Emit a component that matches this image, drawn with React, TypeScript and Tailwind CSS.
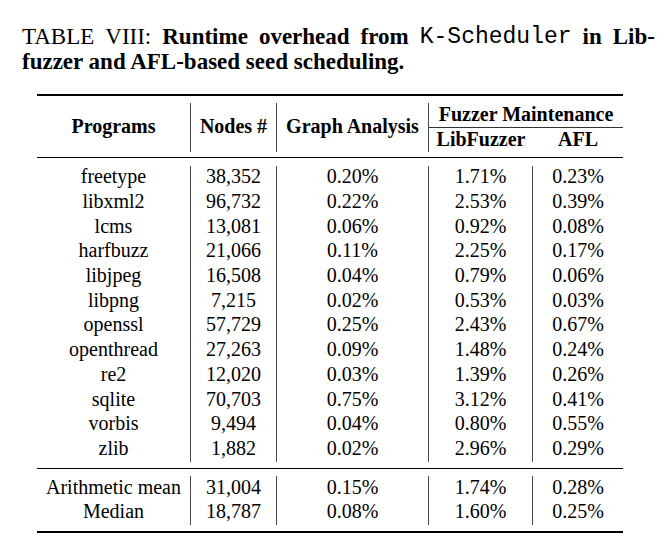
const rows = [
  ["freetype", "38,352", "0.20%", "1.71%", "0.23%"],
  ["libxml2", "96,732", "0.22%", "2.53%", "0.39%"],
  ["lcms", "13,081", "0.06%", "0.92%", "0.08%"],
  ["harfbuzz", "21,066", "0.11%", "2.25%", "0.17%"],
  ["libjpeg", "16,508", "0.04%", "0.79%", "0.06%"],
  ["libpng", "7,215", "0.02%", "0.53%", "0.03%"],
  ["openssl", "57,729", "0.25%", "2.43%", "0.67%"],
  ["openthread", "27,263", "0.09%", "1.48%", "0.24%"],
  ["re2", "12,020", "0.03%", "1.39%", "0.26%"],
  ["sqlite", "70,703", "0.75%", "3.12%", "0.41%"],
  ["vorbis", "9,494", "0.04%", "0.80%", "0.55%"],
  ["zlib", "1,882", "0.02%", "2.96%", "0.29%"],
];

const summary = [
  ["Arithmetic mean", "31,004", "0.15%", "1.74%", "0.28%"],
  ["Median", "18,787", "0.08%", "1.60%", "0.25%"],
];

const cols = "grid grid-cols-[154px_86px_152px_104px_90px]";

const Row = ({ cells }: { cells: string[] }) => (
  <div className={`${cols} h-[24.7px] grid-rows-[24.7px]`}>
    {cells.map((c, i) => (
      <div
        key={i}
        className={`flex items-center justify-center whitespace-nowrap leading-[18px] pb-[3px] ${
          i < 4 ? "border-r border-[#4a4a4a]" : ""
        }`}
      >
        {c}
      </div>
    ))}
  </div>
);

const App = () => {
  return (
    <div className="w-[669px] h-[548px] bg-white text-black [font-family:Liberation_Serif,serif] overflow-hidden">
      {/* caption */}
      <div className="pt-[25px] pl-[22px] w-[655px] text-[23px] leading-[24.5px]">
        <div className="whitespace-nowrap flex justify-between">
          <span>TABLE</span>
          <span>VIII:</span>
          <span className="font-bold">Runtime</span>
          <span className="font-bold">overhead</span>
          <span className="font-bold">from</span>
          <span className="[font-family:Liberation_Mono,monospace]">K-Scheduler</span>
          <span className="font-bold">in</span>
          <span className="font-bold">Lib-</span>
        </div>
        <div className="font-bold">fuzzer and AFL-based seed scheduling.</div>
      </div>

      {/* table */}
      <div className="ml-[37px] mt-[20px] w-[586px] text-[20px]">
        <div className="h-[2px] bg-black" />
        <div className="h-[7px]" />
        <div className={`${cols} grid-rows-[25px_24px] font-bold`}>
          <div className="row-span-2 flex items-center justify-center border-r border-[#4a4a4a] pb-[3px]">
            Programs
          </div>
          <div className="row-span-2 flex items-center justify-center border-r border-[#4a4a4a] pb-[3px]">
            Nodes #
          </div>
          <div className="row-span-2 flex items-center justify-center border-r border-[#4a4a4a] whitespace-nowrap pb-[3px]">
            Graph Analysis
          </div>
          <div className="col-span-2 flex items-center justify-center border-b border-[#333] whitespace-nowrap pb-[2px]">
            Fuzzer Maintenance
          </div>
          <div className="flex items-center justify-center pb-[3px]">LibFuzzer</div>
          <div className="flex items-center justify-center pb-[3px]">AFL</div>
        </div>
        <div className="h-[4.5px]" />
        <div className="h-[1px] bg-black" />
        <div className="h-[8px]" />
        {rows.map((r) => (
          <Row key={r[0]} cells={r} />
        ))}
        <div className="h-[6px]" />
        <div className="h-[1px] bg-black" />
        <div className="h-[7px]" />
        {summary.map((r) => (
          <Row key={r[0]} cells={r} />
        ))}
        <div className="h-[5.5px]" />
        <div className="h-[2px] bg-black" />
      </div>
    </div>
  );
};

export default App;
